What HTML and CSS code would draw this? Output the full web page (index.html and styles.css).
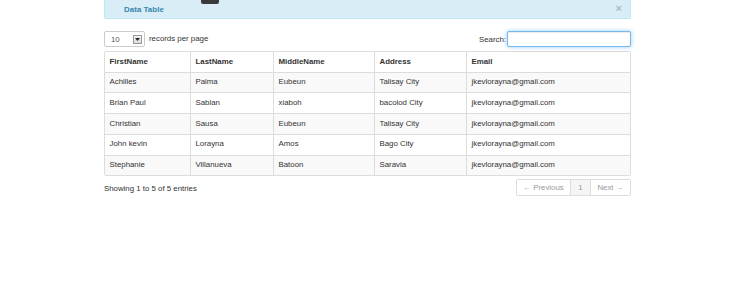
FILE: index.html
```html
<!DOCTYPE html>
<html>
<head>
<meta charset="utf-8">
<link rel="stylesheet" href="styles.css">
</head>
<body>
<div class="page">
  <div class="tip"></div>
  <div class="alert">
    <span class="alert-title">Data Table</span>
    <span class="close">×</span>
  </div>
  <div class="controls">
    <div class="length">
      <div class="select">
        <span class="select-val">10</span>
        <span class="select-btn"><svg width="5" height="3" viewBox="0 0 5 3"><path d="M0 0 H5 L2.5 3 Z" fill="#222"/></svg></span>
      </div>
      <span class="length-label">records per page</span>
    </div>
    <div class="search">
      <span class="search-label">Search:</span>
      <div class="search-input"></div>
    </div>
  </div>
  <table class="grid">
    <colgroup>
      <col class="c1"><col class="c2"><col class="c3"><col class="c4"><col class="c5">
    </colgroup>
    <thead>
      <tr><th>FirstName</th><th>LastName</th><th>MiddleName</th><th>Address</th><th>Email</th></tr>
    </thead>
    <tbody>
      <tr class="odd"><td>Achilles</td><td>Palma</td><td>Eubeun</td><td>Talisay City</td><td>jkevlorayna@gmail.com</td></tr>
      <tr><td>Brian Paul</td><td>Sablan</td><td>xiaboh</td><td>bacolod City</td><td>jkevlorayna@gmail.com</td></tr>
      <tr class="odd"><td>Christian</td><td>Sausa</td><td>Eubeun</td><td>Talisay City</td><td>jkevlorayna@gmail.com</td></tr>
      <tr><td>John kevin</td><td>Lorayna</td><td>Amos</td><td>Bago City</td><td>jkevlorayna@gmail.com</td></tr>
      <tr class="odd"><td>Stephanie</td><td>Villanueva</td><td>Batoon</td><td>Saravia</td><td>jkevlorayna@gmail.com</td></tr>
    </tbody>
  </table>
  <div class="footer">
    <div class="info">Showing 1 to 5 of 5 entries</div>
    <div class="pager">
      <span class="pg pg-prev">← Previous</span>
      <span class="pg pg-active">1</span>
      <span class="pg pg-next">Next →</span>
    </div>
  </div>
</div>
</body>
</html>
```

FILE: styles.css
```css
html, body {
  margin: 0;
  padding: 0;
  background: #fff;
}
body {
  font-family: "Liberation Sans", Arial, sans-serif;
  font-size: 7.85px;
  color: #333;
}
.page {
  position: relative;
  margin-left: 104px;
  width: 527px;
}
.tip {
  position: absolute;
  left: 97px;
  top: 0;
  width: 18px;
  height: 4px;
  background: #3a3a3a;
  border-radius: 0 0 2px 2px;
  z-index: 2;
}
.alert {
  box-sizing: border-box;
  height: 19px;
  background: #d9edf7;
  border: 1px solid #bce8f1;
  border-top: none;
  border-radius: 0 0 2px 2px;
  color: #3a87ad;
  display: flex;
  align-items: center;
  justify-content: space-between;
  padding: 0 8px 0 19px;
}
.alert-title {
  font-weight: bold;
  font-size: 8px;
}
.close {
  color: #000;
  opacity: 0.22;
  font-weight: bold;
  font-size: 11px;
  line-height: 8px;
  margin-top: -2px;
}
.controls {
  margin-top: 12px;
  display: flex;
  justify-content: space-between;
  align-items: center;
  height: 16px;
}
.length {
  display: flex;
  align-items: center;
}
.select {
  box-sizing: border-box;
  width: 41px;
  height: 16px;
  border: 1px solid #ccc;
  border-radius: 2px;
  display: flex;
  align-items: center;
  justify-content: space-between;
  padding: 0 2px 0 6px;
  background: #fff;
}
.select-val {
  color: #555;
}
.select-btn {
  box-sizing: border-box;
  width: 9px;
  height: 9px;
  border: 1px solid #999;
  background: linear-gradient(#f4f4f4, #dcdcdc);
  display: flex;
  align-items: center;
  justify-content: center;
}
.length-label {
  margin-left: 4px;
  margin-top: -2px;
}
.search {
  display: flex;
  align-items: center;
}
.search-label {
  margin-right: 1px;
}
.search-input {
  box-sizing: border-box;
  width: 124px;
  height: 16px;
  border: 1px solid rgba(82, 168, 236, 0.8);
  border-radius: 2px;
  box-shadow: inset 0 1px 1px rgba(0,0,0,.075), 0 0 4px rgba(82,168,236,.6);
  background: #fff;
}
.grid {
  margin-top: 4px;
  width: 527px;
  table-layout: fixed;
  border-collapse: separate;
  border-spacing: 0;
  border: 1px solid #ddd;
  border-radius: 2px;
}
.c1 { width: 85px; }
.c2 { width: 83px; }
.c3 { width: 101px; }
.c4 { width: 92px; }
.c5 { width: auto; }
.grid th, .grid td {
  text-align: left;
  padding: 4.5px 4.5px;
  line-height: 10.8px;
  border-left: 1px solid #ddd;
  white-space: nowrap;
  overflow: hidden;
}
.grid th {
  font-weight: bold;
  line-height: 10.5px;
}
.grid td {
  border-top: 1px solid #ddd;
}
.grid th:first-child, .grid td:first-child {
  border-left: none;
}
.grid tr.odd td {
  background: #f9f9f9;
}
.footer {
  display: flex;
  justify-content: space-between;
  align-items: center;
  margin-top: 3px;
}
.info {
  margin-top: 1px;
}
.pager {
  display: flex;
  border: 1px solid #ddd;
  border-radius: 2px;
  height: 17px;
  box-sizing: border-box;
}
.pg {
  display: flex;
  align-items: center;
  color: #999;
  border-left: 1px solid #ddd;
  box-sizing: border-box;
  justify-content: center;
  padding: 0;
}
.pg-prev {
  border-left: none;
  width: 53px;
}
.pg-active {
  background: #f5f5f5;
  width: 20px;
}
.pg-next {
  width: 40px;
}
```
